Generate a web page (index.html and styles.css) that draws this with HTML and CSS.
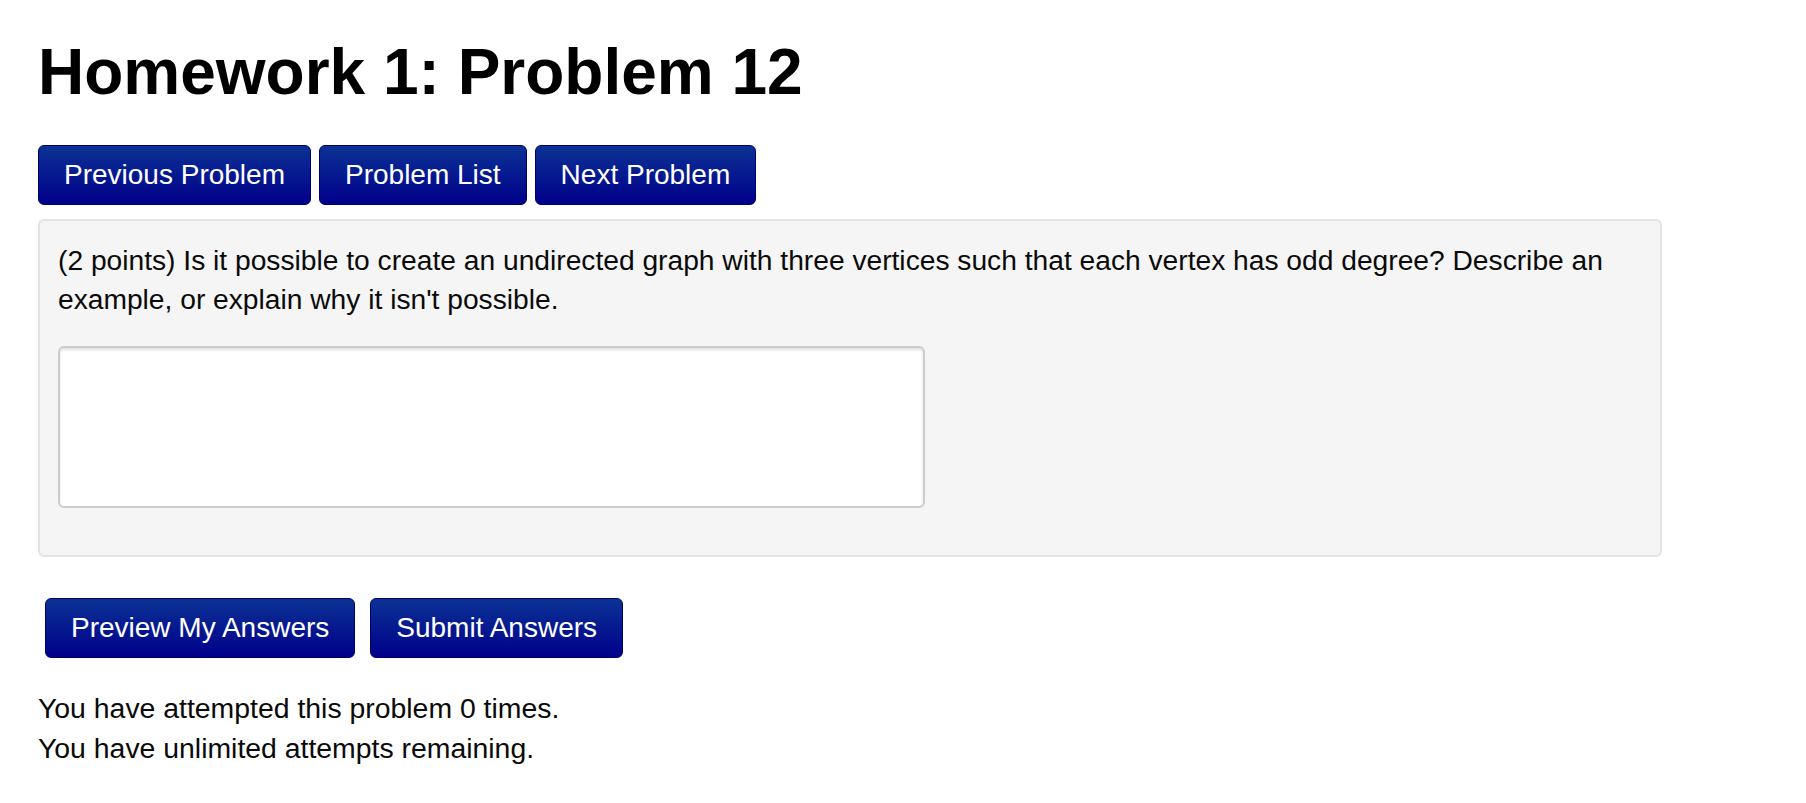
FILE: index.html
```html
<!DOCTYPE html>
<html lang="en">

<head>
    <meta charset="UTF-8" />
    <meta name="viewport" content="width=device-width, initial-scale=1.0" />
    <title>Homework 1: Problem 12</title>
    <link rel="stylesheet" href="styles.css">
</head>

<body>
    <div class="page">
        <h1 class="page-title">Homework 1: Problem 12</h1>

        <div class="nav-buttons">
            <a class="btn" href="#">Previous Problem</a>
            <a class="btn" href="#">Problem List</a>
            <a class="btn" href="#">Next Problem</a>
        </div>

        <form class="problem-form">
            <div class="problem-box">
                <p class="problem-text">(2 points) Is it possible to create an undirected graph with three vertices such that each vertex has odd degree? Describe an example, or explain why it isn't possible.</p>
                <textarea class="answer" rows="4"></textarea>
            </div>

            <div class="submit-buttons">
                <button class="btn" type="button">Preview My Answers</button>
                <button class="btn" type="button">Submit Answers</button>
            </div>
        </form>

        <div class="attempts">
            <p>You have attempted this problem 0 times.</p>
            <p>You have unlimited attempts remaining.</p>
        </div>
    </div>
</body>

</html>
```

FILE: styles.css
```css
* {
    margin: 0;
    padding: 0;
    box-sizing: border-box;
}

body {
    font-family: "Liberation Sans", Arial, Helvetica, sans-serif;
    font-size: 28px;
    color: #0a0a0a;
    background: #fff;
}

.page {
    padding: 37px 38px 0 38px;
}

.page-title {
    font-size: 64px;
    line-height: 70px;
    font-weight: bold;
    color: #000;
    margin-bottom: 38px;
}

.nav-buttons {
    display: flex;
    gap: 8px;
    margin-bottom: 14px;
}

.btn {
    display: inline-flex;
    align-items: center;
    height: 60px;
    padding: 0 25px;
    font-family: inherit;
    font-size: 28px;
    color: #fff;
    text-decoration: none;
    background: linear-gradient(to bottom, #0b3294 0%, #00008b 100%);
    border: 1px solid #00006a;
    border-radius: 6px;
    cursor: pointer;
}

.problem-box {
    width: 1624px;
    background: #f5f5f5;
    border: 2px solid #e3e3e3;
    border-radius: 6px;
    padding: 20px 18px 47px 18px;
}

.problem-text {
    font-size: 28.2px;
    line-height: 39px;
    margin-bottom: 27px;
}

.answer {
    display: block;
    width: 867px;
    height: 162px;
    background: #fff;
    border: 2px solid #ccc;
    border-radius: 6px;
    box-shadow: inset 0 2px 3px rgba(0, 0, 0, 0.12);
    resize: none;
    font-family: inherit;
    font-size: 26px;
}

.submit-buttons {
    display: flex;
    gap: 15px;
    margin: 41px 0 0 7px;
}

.attempts {
    margin-top: 30px;
    font-size: 28.4px;
    line-height: 40px;
}
```
